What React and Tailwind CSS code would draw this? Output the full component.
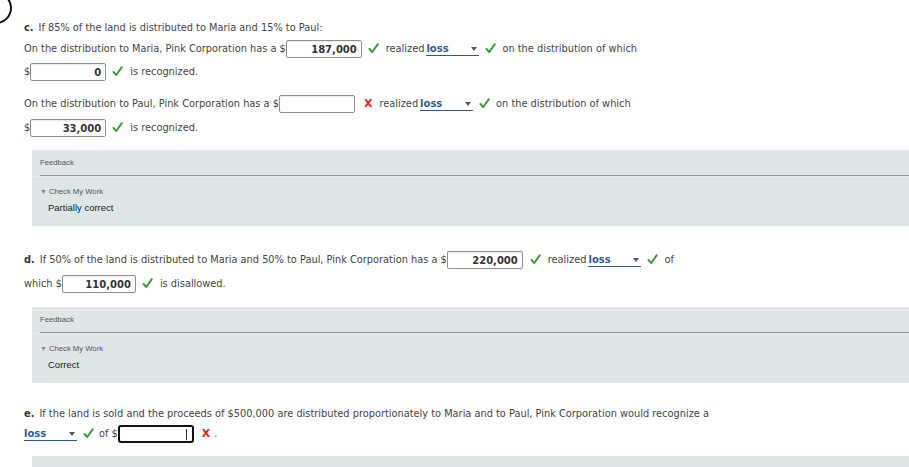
import React from "react";

const Check = () => (
  <svg width="11" height="11" viewBox="0 0 11 11" className="inline-block shrink-0">
    <path d="M1.5 6 L4.3 9 L9.8 1.2" fill="none" stroke="#3f9a3a" strokeWidth="2" strokeLinecap="round" strokeLinejoin="round" />
  </svg>
);

const Cross = () => (
  <span className="font-bold text-[#d9251d] text-[11px] leading-none shrink-0">X</span>
);

const Box = ({ value, w = "w-[76px]", focused = false }) => (
  <span
    className={`inline-flex items-center justify-end h-[18px] ${w} bg-white rounded-[2px] pr-[4px] font-bold text-[10px] text-[#333] shrink-0 ${
      focused ? "border-2 border-[#111] rounded-[3px]" : "border border-[#8f8f8f] shadow-[inset_0_1px_1px_rgba(0,0,0,0.08)]"
    }`}
  >
    {value}
    {focused && <span className="inline-block w-px h-[11px] bg-[#333] mr-[1px]" />}
  </span>
);

const Select = () => (
  <span className="inline-flex items-center justify-between w-[53px] h-[14px] border-b border-[#2b5d8c] bg-white shrink-0">
    <span className="font-bold text-[10px] text-[#2b5d8c] leading-none">loss</span>
    <svg width="6" height="4" viewBox="0 0 6 4" className="mr-[2px]">
      <path d="M0 0 H6 L3 4 Z" fill="#555" />
    </svg>
  </span>
);

const Feedback = ({ result }) => (
  <div className="ml-[8px] mr-[-4px] h-[76px] bg-[#dfe6e6] flex flex-col" style={{ fontFamily: "'Liberation Sans', Arial, sans-serif" }}>
    <div className="pl-[8px] pt-[7px] h-[25px] text-[7.7px] text-[#555]">Feedback</div>
    <div className="ml-[8px] h-[1px] bg-[#8c9494]" />
    <div className="h-[1px] bg-[#e8eded]" />
    <div className="pl-[8px] pt-[9px] text-[7.7px] text-[#555] flex items-center gap-[2px]">
      <span className="text-[7px] text-[#888]">▼</span>
      <span>Check My Work</span>
    </div>
    <div className="pl-[16px] pt-[3px] text-[9.5px] text-[#222]">{result}</div>
  </div>
);

export default function App() {
  return (
    <div
      className="relative w-[909px] h-[467px] overflow-hidden bg-white text-[9.8px] text-[#444]"
      style={{ fontFamily: "'DejaVu Sans', Verdana, sans-serif" }}
    >
      <svg className="absolute left-0 top-0" width="20" height="30" viewBox="0 0 20 30">
        <circle cx="-4" cy="8" r="15" fill="none" stroke="#111" strokeWidth="2" />
      </svg>

      <div className="pl-[24px] pt-[21px]">
        <div className="h-[14px] flex items-center">
          <span className="font-bold text-[#333] mr-[5px]">c.</span>
          <span>If 85% of the land is distributed to Maria and 15% to Paul:</span>
        </div>

        <div className="mt-[5px] h-[18px] flex items-center">
          <span>On the distribution to Maria, Pink Corporation has a $</span>
          <Box value="187,000" />
          <span className="ml-[6px]"><Check /></span>
          <span className="ml-[7px] mr-[2px]">realized</span>
          <Select />
          <span className="ml-[6px]"><Check /></span>
          <span className="ml-[6px]">on the distribution of which</span>
        </div>

        <div className="mt-[5px] h-[18px] flex items-center">
          <span>$</span>
          <Box value="0" />
          <span className="ml-[6px]"><Check /></span>
          <span className="ml-[7px]">is recognized.</span>
        </div>

        <div className="mt-[14px] h-[18px] flex items-center">
          <span>On the distribution to Paul, Pink Corporation has a $</span>
          <Box value="" />
          <span className="ml-[9px]"><Cross /></span>
          <span className="ml-[7px] mr-[2px]">realized</span>
          <Select />
          <span className="ml-[6px]"><Check /></span>
          <span className="ml-[6px]">on the distribution of which</span>
        </div>

        <div className="mt-[6px] h-[18px] flex items-center">
          <span>$</span>
          <Box value="33,000" />
          <span className="ml-[6px]"><Check /></span>
          <span className="ml-[7px]">is recognized.</span>
        </div>

        <div className="mt-[13px]">
          <Feedback result="Partially correct" />
        </div>

        <div className="mt-[25px] h-[18px] flex items-center">
          <span className="font-bold text-[#333] mr-[5px]">d.</span>
          <span>If 50% of the land is distributed to Maria and 50% to Paul, Pink Corporation has a $</span>
          <Box value="220,000" />
          <span className="ml-[7px]"><Check /></span>
          <span className="ml-[7px] mr-[2px]">realized</span>
          <Select />
          <span className="ml-[6px]"><Check /></span>
          <span className="ml-[6px]">of</span>
        </div>

        <div className="mt-[6px] h-[18px] flex items-center">
          <span>which $</span>
          <Box value="110,000" w="w-[74px]" />
          <span className="ml-[6px]"><Check /></span>
          <span className="ml-[7px]">is disallowed.</span>
        </div>

        <div className="mt-[14px]">
          <Feedback result="Correct" />
        </div>

        <div className="mt-[24px] h-[14px] flex items-center">
          <span className="font-bold text-[#333] mr-[5px]">e.</span>
          <span>If the land is sold and the proceeds of $500,000 are distributed proportionately to Maria and to Paul, Pink Corporation would recognize a</span>
        </div>

        <div className="mt-[4px] h-[18px] flex items-center">
          <Select />
          <span className="ml-[6px]"><Check /></span>
          <span className="ml-[5px]">of $</span>
          <Box value="" focused />
          <span className="ml-[8px]"><Cross /></span>
          <span className="ml-[4px]">.</span>
        </div>

        <div className="mt-[13px] ml-[8px] mr-[-4px] h-[40px] bg-[#dfe6e6]" />
      </div>
    </div>
  );
}
